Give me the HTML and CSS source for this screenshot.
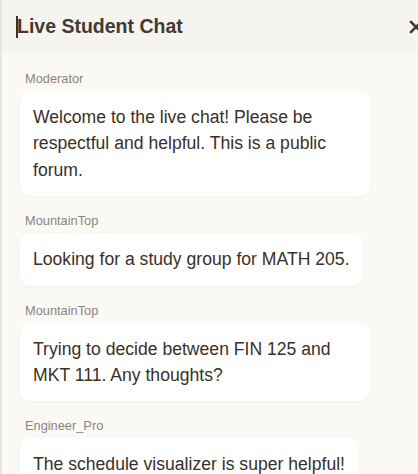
FILE: index.html
```html
<!DOCTYPE html>
<html lang="en">
<head>
    <meta charset="UTF-8">
    <meta name="viewport" content="width=device-width, initial-scale=1.0">
    <title>Live Student Chat</title>
    <link rel="stylesheet" href="styles.css">
</head>
<body>

<div class="chat-panel">
    <div class="chat-header">
        <h3><span class="caret"></span>Live Student Chat</h3>
        <button class="close-button" aria-label="Close">
            <svg width="14" height="14" viewBox="0 0 14 14">
                <path d="M2 2 L12 12 M12 2 L2 12" stroke="#443a31" stroke-width="2.6" stroke-linecap="square"/>
            </svg>
        </button>
    </div>

    <div class="chat-messages">
        <div class="message">
            <div class="author">Moderator</div>
            <div class="bubble">Welcome to the live chat! Please be respectful and helpful. This is a public forum.</div>
        </div>
        <div class="message">
            <div class="author">MountainTop</div>
            <div class="bubble">Looking for a study group for MATH 205.</div>
        </div>
        <div class="message">
            <div class="author">MountainTop</div>
            <div class="bubble">Trying to decide between FIN 125 and MKT 111. Any thoughts?</div>
        </div>
        <div class="message">
            <div class="author">Engineer_Pro</div>
            <div class="bubble">The schedule visualizer is super helpful!</div>
        </div>
    </div>
</div>

</body>
</html>
```

FILE: styles.css
```css
body {
    margin: 0;
    font-family: "Liberation Sans", Arial, sans-serif;
    background-color: #fbf9f4;
    color: #3b322a;
    overflow: hidden;
}

.chat-panel {
    width: 440px;
    height: 474px;
    border-left: 2px solid #e9e6e1;
    background: #fbf9f4;
    overflow: hidden;
}

.chat-header {
    display: flex;
    justify-content: space-between;
    align-items: center;
    height: 53px;
    padding: 0 14px;
    background: #f5f4f0;
    box-sizing: border-box;
    width: 438px;
}

.chat-header h3 {
    margin: 0;
    font-size: 19.5px;
    font-weight: bold;
    color: #443a31;
    display: flex;
    align-items: center;
}

.caret {
    display: inline-block;
    width: 2px;
    height: 22px;
    background: #3b322a;
    margin-right: -1px;
}

.close-button {
    background: none;
    border: none;
    padding: 0;
    margin-right: 3px;
    cursor: pointer;
    display: flex;
}

.chat-messages {
    padding: 18px 18px 0 18px;
}

.message {
    margin-bottom: 17px;
}

.author {
    font-size: 12.8px;
    color: #8a8580;
    margin: 0 0 5px 5px;
    line-height: 15px;
}

.bubble {
    display: inline-block;
    max-width: 350px;
    box-sizing: border-box;
    background: #ffffff;
    padding: 13px 13px;
    border-radius: 10px;
    font-size: 17.6px;
    line-height: 26.4px;
    color: #3a3028;
    box-shadow: 0 1px 3px rgba(0, 0, 0, 0.04);
}
```
